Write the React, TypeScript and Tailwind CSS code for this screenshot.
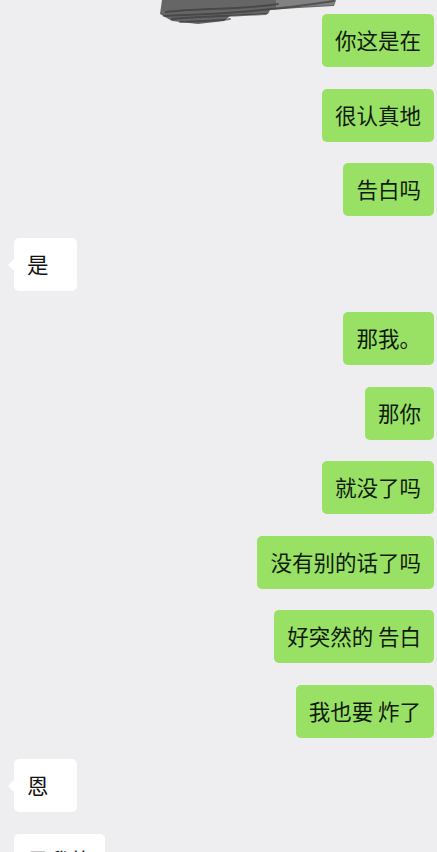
import React from "react";

type Msg = { text: string; me: boolean };

const messages: Msg[] = [
  { text: "你这是在", me: true },
  { text: "很认真地", me: true },
  { text: "告白吗", me: true },
  { text: "是", me: false },
  { text: "那我。", me: true },
  { text: "那你", me: true },
  { text: "就没了吗", me: true },
  { text: "没有别的话了吗", me: true },
  { text: "好突然的 告白", me: true },
  { text: "我也要 炸了", me: true },
  { text: "恩", me: false },
  { text: "是我的", me: false },
];

// the pencil scribble covering a name at the top
const Scribble = () => (
  <svg
    className="absolute left-[158px] top-0"
    width="180"
    height="26"
    viewBox="0 0 180 26"
  >
    <path
      d="M4 0 L178 0 L176 6 L140 8 L112 10 L110 14 L72 16 L66 21 L40 24 L14 21 L2 14 Z"
      fill="#4e4e4e"
      opacity="0.85"
    />
    <path
      d="M118 0 L178 0 L176 5 L118 8 Z"
      fill="#8a8a8a"
      opacity="0.8"
    />
    <path
      d="M8 12 C40 8 80 10 120 4 M6 16 C40 14 90 14 176 1 M14 19 C50 16 80 16 108 14 M22 22 C40 21 60 21 72 19"
      stroke="#333"
      strokeWidth="2"
      strokeLinecap="round"
      fill="none"
      opacity="0.6"
    />
  </svg>
);

const Bubble = ({ msg }: { msg: Msg }) => {
  if (msg.me) {
    return (
      <div className="flex justify-end pr-[3px]">
        <div className="h-[53px] flex items-center px-[13px] rounded-[5px] bg-[#98e165] text-[21.5px] text-[#101a0c] whitespace-pre">
          {msg.text}
        </div>
      </div>
    );
  }
  return (
    <div className="flex justify-start pl-[14px]">
      <div className="relative h-[53px] min-w-[63px] flex items-center px-[13px] rounded-[5px] bg-white text-[21.5px] text-[#121212] whitespace-pre">
        <span className="absolute -left-[6px] top-[21px] w-0 h-0 border-y-[6px] border-y-transparent border-r-[6px] border-r-white" />
        {msg.text}
      </div>
    </div>
  );
};

const App = () => {
  return (
    <div
      className="relative w-[437px] h-[852px] overflow-hidden bg-[#eeedef]"
      style={{ fontFamily: '"Noto Sans CJK SC", "Noto Sans", sans-serif' }}
    >
      <Scribble />
      <div className="flex flex-col gap-[21.5px] pt-[14px]">
        {messages.map((m, i) => (
          <Bubble key={i} msg={m} />
        ))}
      </div>
    </div>
  );
};

export default App;
